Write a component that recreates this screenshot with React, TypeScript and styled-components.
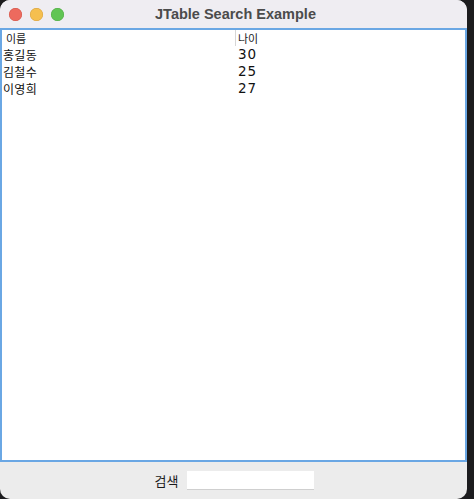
import { Fragment } from 'react';
import styled, { createGlobalStyle } from 'styled-components';

const GlobalStyle = createGlobalStyle`
  html, body {
    margin: 0;
    padding: 0;
    background: #1c1c1e;
    overflow: hidden;
  }
`;

const KR = `"Noto Sans CJK KR", "Noto Sans", sans-serif`;

const Window = styled.div`
  width: 467px;
  height: 499px;
  background: #ececec;
  border-radius: 10px;
  overflow: hidden;
  display: flex;
  flex-direction: column;
`;

const TitleBar = styled.div`
  height: 28px;
  flex-shrink: 0;
  background: #efedf2;
  display: flex;
  align-items: center;
`;

const Lights = styled.div`
  display: flex;
  gap: 8px;
  padding-left: 9px;
`;

const Light = styled.span<{ $color: string; $edge: string }>`
  width: 13px;
  height: 13px;
  border-radius: 50%;
  background: ${(p) => p.$color};
  box-shadow: inset 0 0 0 0.5px ${(p) => p.$edge};
`;

const Title = styled.div`
  flex: 1;
  text-align: center;
  margin-right: 60px;
  font-family: "Liberation Sans", Arial, sans-serif;
  font-weight: bold;
  font-size: 14.5px;
  color: #4b4b4b;
`;

const TableArea = styled.div`
  flex: 1;
  border: 2px solid #6aa7e4;
  background: #fff;
  display: flex;
  flex-direction: column;
`;

const Grid = styled.div`
  display: grid;
  grid-template-columns: 233px 1fr;
`;

const HeadCell = styled.div<{ $sep?: boolean }>`
  height: 16px;
  line-height: 1;
  display: flex;
  align-items: center;
  padding-left: ${(p) => (p.$sep ? '2px' : '4px')};
  border-left: ${(p) => (p.$sep ? '1px solid #d6d6d6' : 'none')};
  font-family: ${KR};
  font-size: 11px;
  color: #222;
`;

const Cell = styled.div<{ $num?: boolean }>`
  height: 17px;
  line-height: 1;
  display: flex;
  align-items: center;
  padding-left: ${(p) => (p.$num ? '3px' : '1px')};
  font-family: ${(p) => (p.$num ? `"DejaVu Sans", sans-serif` : KR)};
  font-size: ${(p) => (p.$num ? '13.5px' : '12px')};
  letter-spacing: ${(p) => (p.$num ? '1px' : '0.3px')};
  color: #111;
`;

const SearchBar = styled.div`
  height: 37px;
  flex-shrink: 0;
  display: flex;
  align-items: center;
  justify-content: center;
  gap: 9px;
  padding-left: 2px;
`;

const Label = styled.span`
  font-family: ${KR};
  font-size: 13px;
  color: #1a1a1a;
`;

const Field = styled.input`
  width: 127px;
  height: 19px;
  box-sizing: border-box;
  border: none;
  border-bottom: 1px solid #cfcfcf;
  background: #fff;
  outline: none;
  margin: 0;
  padding: 0 4px;
`;

const rows = [
  { name: '홍길동', age: '30' },
  { name: '김철수', age: '25' },
  { name: '이영희', age: '27' },
];

export default function App() {
  return (
    <>
      <GlobalStyle />
      <Window>
        <TitleBar>
          <Lights>
            <Light $color="#ed6a5e" $edge="#d05448" />
            <Light $color="#f5bf4f" $edge="#d6a03c" />
            <Light $color="#61c554" $edge="#4fa944" />
          </Lights>
          <Title>JTable Search Example</Title>
        </TitleBar>
        <TableArea>
          <Grid>
            <HeadCell>이름</HeadCell>
            <HeadCell $sep>나이</HeadCell>
            {rows.map((r) => (
              <Fragment key={r.name}>
                <Cell>{r.name}</Cell>
                <Cell $num>{r.age}</Cell>
              </Fragment>
            ))}
          </Grid>
        </TableArea>
        <SearchBar>
          <Label>검색</Label>
          <Field />
        </SearchBar>
      </Window>
    </>
  );
}
